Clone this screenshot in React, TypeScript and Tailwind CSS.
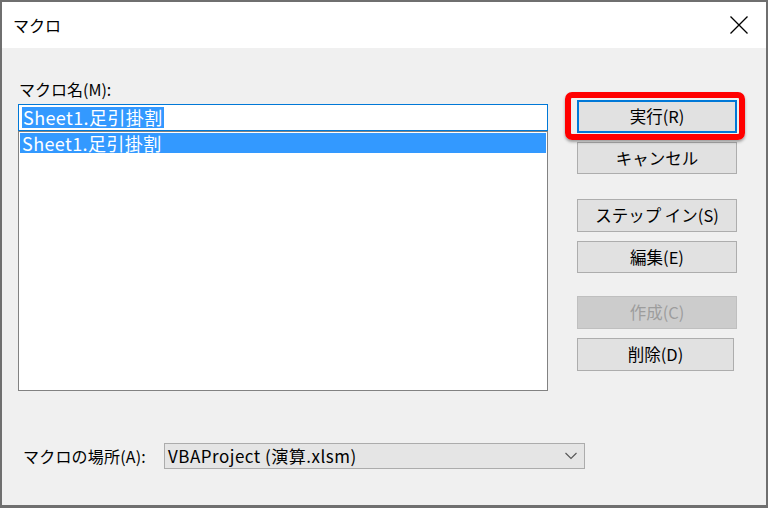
const font = { fontFamily: '"Noto Sans CJK JP", "Noto Sans", sans-serif' }

function DlgButton({ label, disabled, focused, className = '' }: { label: string; disabled?: boolean; focused?: boolean; className?: string }) {
    return (
        <div
            className={`h-[32px] flex items-center justify-center text-[16.5px] border ${
                disabled
                    ? 'bg-[#cccccc] border-[#bfbfbf] text-[#9d9d9d]'
                    : focused
                      ? 'bg-[#e1e1e1] border-[#0078d7] text-black ring-1 ring-inset ring-[#0078d7]'
                      : 'bg-[#e1e1e1] border-[#adadad] text-black'
            } ${className}`}
        >
            {label}
        </div>
    )
}

export default function App() {
    return (
        <div className="w-[768px] h-[508px] flex flex-col border-2 border-b-[3px] border-[#6f6f6f] bg-[#f0f0f0]" style={font}>
            {/* title bar */}
            <div className="h-[46px] shrink-0 bg-white flex items-center justify-between pl-[11px] pr-[18px]">
                <span className="text-[16px] text-black">マクロ</span>
                <svg width="18" height="18" viewBox="0 0 18 18" className="text-black">
                    <path d="M0.5 0.5 L17.5 17.5 M17.5 0.5 L0.5 17.5" stroke="currentColor" strokeWidth="1.3" fill="none" />
                </svg>
            </div>

            <div className="flex-1 flex flex-col">
                <div className="flex">
                    {/* left: macro name + list */}
                    <div className="w-[530px] ml-[16px] pt-[30px]">
                        <div className="text-[16px] leading-[22px] text-black pl-[1px]">マクロ名(M):</div>
                        <div className="mt-[4px] h-[27px] border border-[#0078d7] bg-white flex items-center pl-[3px]">
                            <span className="bg-[#3399ff] text-white text-[18px] leading-[21px] tracking-[0.4px] px-[1px]">Sheet1.足引掛割</span>
                        </div>
                        <div className="h-[260px] border border-[#828282] bg-white p-[1px]">
                            <div className="h-[20px] bg-[#3399ff] text-white text-[18px] leading-[20px] tracking-[0.4px] pl-[2px]">
                                Sheet1.足引掛割
                            </div>
                        </div>
                    </div>

                    {/* right: buttons */}
                    <div className="ml-[29px] w-[160px] pt-[52px] flex flex-col">
                        <div className="relative">
                            <DlgButton label="実行(R)" focused className="h-[33px]" />
                            <div className="absolute -left-[12px] -right-[8px] -top-[8px] -bottom-[7px] border-[6px] border-[#ff0000] rounded-[7px] shadow-[0_2px_3px_rgba(0,0,0,0.35)]" />
                        </div>
                        <DlgButton label="キャンセル" className="mt-[9px]" />
                        <DlgButton label="ステップ イン(S)" className="mt-[25px] h-[33px]" />
                        <DlgButton label="編集(E)" className="mt-[9px]" />
                        <DlgButton label="作成(C)" disabled className="mt-[23px] h-[33px]" />
                        <DlgButton label="削除(D)" className="mt-[9px] h-[33px] w-[157px]" />
                    </div>
                </div>

                {/* bottom: macro location */}
                <div className="mt-[52px] flex items-center pl-[21px]">
                    <span className="text-[16px] tracking-[0.2px] text-black w-[141px]">マクロの場所(A):</span>
                    <div className="w-[421px] h-[26px] border border-[#acacac] bg-[#e5e5e5] flex items-center justify-between pl-[3px] pr-[6px]">
                        <span className="text-[17px] tracking-[0.5px] text-black">VBAProject (演算.xlsm)</span>
                        <svg width="12" height="8" viewBox="0 0 12 8" className="mr-[1px]">
                            <path d="M0.5 1 L6 6.5 L11.5 1" stroke="#555" strokeWidth="1.1" fill="none" />
                        </svg>
                    </div>
                </div>
            </div>
        </div>
    )
}
